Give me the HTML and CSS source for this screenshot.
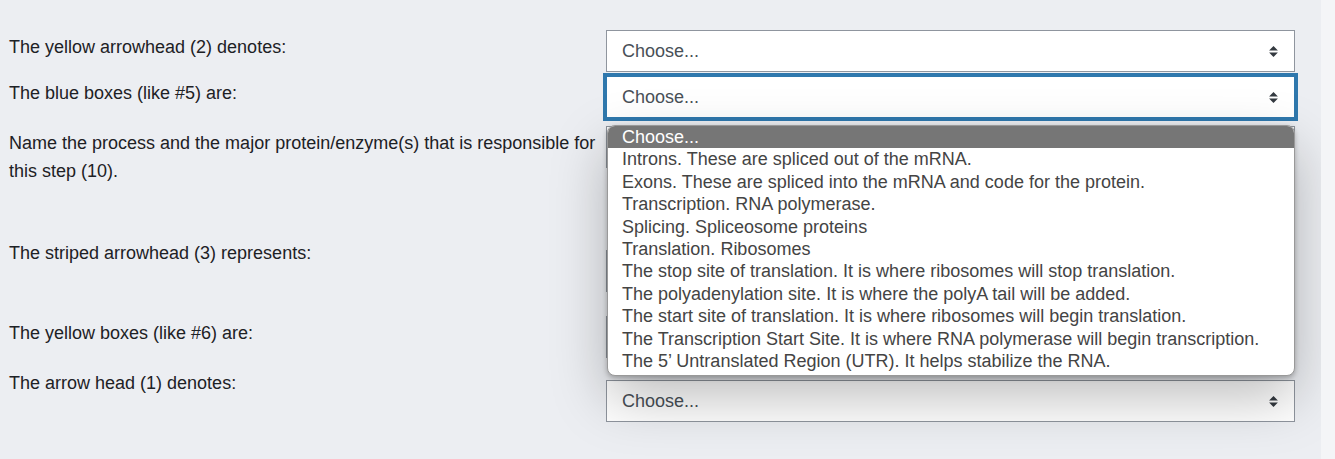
FILE: index.html
```html
<!DOCTYPE html>
<html lang="en">
<head>
<meta charset="utf-8">
<title>Match question</title>
<link rel="stylesheet" href="styles.css">
</head>
<body>
<div class="page">
  <main class="main">
    <div class="form">
      <div class="label">The yellow arrowhead (2) denotes:</div>
      <div class="select">
        <span class="select-text">Choose...</span>
        <svg class="arrows" width="9" height="11" viewBox="0 0 4 5"><path d="M2 0L0 2h4zm0 5L0 3h4z"/></svg>
      </div>

      <div class="label">The blue boxes (like #5) are:</div>
      <div class="select select--focus">
        <span class="select-text">Choose...</span>
        <svg class="arrows" width="9" height="11" viewBox="0 0 4 5"><path d="M2 0L0 2h4zm0 5L0 3h4z"/></svg>
      </div>

      <div class="label">Name the process and the major protein/enzyme(s) that is responsible for this step (10).</div>
      <div class="select">
        <span class="select-text">Choose...</span>
        <svg class="arrows" width="9" height="11" viewBox="0 0 4 5"><path d="M2 0L0 2h4zm0 5L0 3h4z"/></svg>
      </div>

      <div class="label">The striped arrowhead (3) represents:</div>
      <div class="select select--low">
        <span class="select-text">Choose...</span>
        <svg class="arrows" width="9" height="11" viewBox="0 0 4 5"><path d="M2 0L0 2h4zm0 5L0 3h4z"/></svg>
      </div>

      <div class="label">The yellow boxes (like #6) are:</div>
      <div class="select">
        <span class="select-text">Choose...</span>
        <svg class="arrows" width="9" height="11" viewBox="0 0 4 5"><path d="M2 0L0 2h4zm0 5L0 3h4z"/></svg>
      </div>

      <div class="label">The arrow head (1) denotes:</div>
      <div class="select select--low">
        <span class="select-text">Choose...</span>
        <svg class="arrows" width="9" height="11" viewBox="0 0 4 5"><path d="M2 0L0 2h4zm0 5L0 3h4z"/></svg>
      </div>
    </div>

    <ul class="dropdown">
      <li class="option option--active">Choose...</li>
      <li class="option">Introns. These are spliced out of the mRNA.</li>
      <li class="option">Exons. These are spliced into the mRNA and code for the protein.</li>
      <li class="option">Transcription. RNA polymerase.</li>
      <li class="option">Splicing. Spliceosome proteins</li>
      <li class="option">Translation. Ribosomes</li>
      <li class="option">The stop site of translation. It is where ribosomes will stop translation.</li>
      <li class="option">The polyadenylation site. It is where the polyA tail will be added.</li>
      <li class="option">The start site of translation. It is where ribosomes will begin translation.</li>
      <li class="option">The Transcription Start Site. It is where RNA polymerase will begin transcription.</li>
      <li class="option">The 5&#8217; Untranslated Region (UTR). It helps stabilize the RNA.</li>
    </ul>
  </main>
  <aside class="strip"></aside>
</div>
</body>
</html>
```
FILE: styles.css
```css
html, body {
  margin: 0;
  padding: 0;
  height: 100%;
}

body {
  font-family: "Liberation Sans", Arial, sans-serif;
  font-size: 18px;
  color: #1d2125;
  background: #eceef2;
  overflow: hidden;
}

.page {
  display: flex;
  height: 459px;
}

.main {
  position: relative;
  flex: 1;
  overflow: hidden;
}

.strip {
  width: 14px;
  background: #f4f5f7;
}

.form {
  display: grid;
  grid-template-columns: 597px 689px;
  grid-template-rows: 46px 50px 110px 80px 50px auto;
  padding: 30px 0 0 9px;
}

.label {
  line-height: 28px;
  padding-top: 3px;
  align-self: start;
}

.select {
  box-sizing: border-box;
  height: 42px;
  border: 1px solid #8f959e;
  background: #fff;
  display: flex;
  align-items: center;
  justify-content: space-between;
  padding: 0 16px 0 15px;
  align-self: start;
}

.select--low {
  margin-top: 14px;
}

.select--focus {
  border-color: #2f78ad;
  box-shadow: 0 0 0 3px #2f78ad;
}

.select-text {
  color: #495057;
  line-height: 27px;
}

.arrows {
  fill: #343a40;
  display: block;
}

.dropdown {
  position: absolute;
  left: 607px;
  top: 125px;
  width: 688px;
  box-sizing: border-box;
  margin: 0;
  padding: 0 0 3px 0;
  list-style: none;
  background: #fff;
  border: 1px solid #999;
  border-radius: 8px;
  overflow: hidden;
  box-shadow: 0 22px 55px rgba(0, 0, 0, 0.26), 0 2px 5px rgba(0, 0, 0, 0.25);
  z-index: 2;
}

.option {
  height: 22.4px;
  line-height: 22.4px;
  padding-left: 14px;
  color: #444;
  white-space: nowrap;
}

.option--active {
  background: #767676;
  color: #fff;
}
```
